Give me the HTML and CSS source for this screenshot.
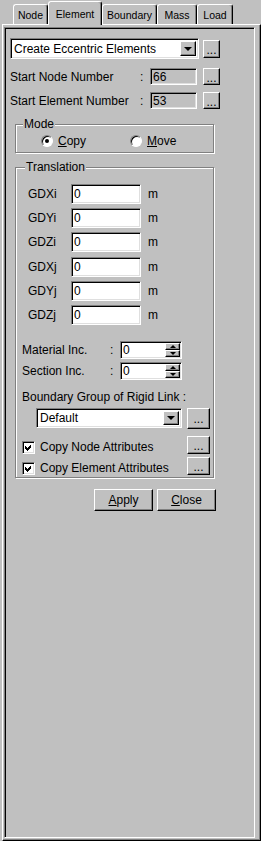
FILE: index.html
```html
<html>
<head>
<link rel="stylesheet" href="styles.css">
</head>
<body>
<div class="tabs">
    <div class="tab t-node">Node</div>
    <div class="tab active t-elem">Element</div>
    <div class="tab t-bound">Boundary</div>
    <div class="tab t-mass">Mass</div>
    <div class="tab t-load">Load</div>
</div>

<div class="panel">
<div class="frame">

    <div class="row r-type">
        <div class="combo combo-type">
            <span class="combo-text">Create Eccentric Elements</span>
            <span class="drop"><i class="arrow"></i></span>
        </div>
        <button class="btn dots">...</button>
    </div>

    <div class="row r-start">
        <span class="start-label">Start Node Number</span><span class="colon">:</span>
        <span class="field ro">66</span>
        <button class="btn dots">...</button>
    </div>
    <div class="row r-start r-start2">
        <span class="start-label">Start Element Number</span><span class="colon">:</span>
        <span class="field ro">53</span>
        <button class="btn dots">...</button>
    </div>

    <div class="group g-mode">
        <div class="group-title">Mode</div>
        <div class="radios">
            <label class="radio r-copy"><span class="radio-dot on"></span><span><u>C</u>opy</span></label>
            <label class="radio"><span class="radio-dot"></span><span><u>M</u>ove</span></label>
        </div>
    </div>

    <div class="group g-trans">
        <div class="group-title t-trans">Translation</div>

        <div class="gd-row gd-first"><span class="gd-label">GDXi</span><span class="field gd-input">0</span><span class="unit">m</span></div>
        <div class="gd-row"><span class="gd-label">GDYi</span><span class="field gd-input">0</span><span class="unit">m</span></div>
        <div class="gd-row"><span class="gd-label">GDZi</span><span class="field gd-input">0</span><span class="unit">m</span></div>
        <div class="gd-row"><span class="gd-label">GDXj</span><span class="field gd-input">0</span><span class="unit">m</span></div>
        <div class="gd-row"><span class="gd-label">GDYj</span><span class="field gd-input">0</span><span class="unit">m</span></div>
        <div class="gd-row"><span class="gd-label">GDZj</span><span class="field gd-input">0</span><span class="unit">m</span></div>

        <div class="inc-row inc-first">
            <span class="inc-label">Material Inc.</span><span class="colon">:</span>
            <span class="field spin"><span class="spin-text">0</span><span class="spin-btns"><span class="spin-b"><i class="up"></i></span><span class="spin-b"><i class="down"></i></span></span></span>
        </div>
        <div class="inc-row">
            <span class="inc-label">Section Inc.</span><span class="colon">:</span>
            <span class="field spin"><span class="spin-text">0</span><span class="spin-btns"><span class="spin-b"><i class="up"></i></span><span class="spin-b"><i class="down"></i></span></span></span>
        </div>

        <div class="bg-label">Boundary Group of Rigid Link :</div>
        <div class="bg-row">
            <div class="combo combo-bg">
                <span class="combo-text">Default</span>
                <span class="drop"><i class="arrow"></i></span>
            </div>
            <button class="btn dots wide">...</button>
        </div>

        <div class="check-row check-first">
            <span class="check"><svg width="7" height="7" viewBox="0 0 7 7"><path d="M0 2 L2 4 L6 0 V3 L2 7 L0 5 Z" fill="#000" shape-rendering="crispEdges"/></svg></span>
            <span class="check-text">Copy Node Attributes</span>
            <button class="btn dots wide">...</button>
        </div>
        <div class="check-row">
            <span class="check"><svg width="7" height="7" viewBox="0 0 7 7"><path d="M0 2 L2 4 L6 0 V3 L2 7 L0 5 Z" fill="#000" shape-rendering="crispEdges"/></svg></span>
            <span class="check-text">Copy Element Attributes</span>
            <button class="btn dots wide">...</button>
        </div>
    </div>

    <div class="actions">
        <button class="btn act"><u>A</u>pply</button>
        <button class="btn act"><u>C</u>lose</button>
    </div>

</div>
</div>
</body>
</html>
```

FILE: styles.css
```css
* {
    box-sizing: border-box;
}
body {
    margin: 0;
    width: 261px;
    height: 841px;
    overflow: hidden;
    background: #c0c0c0;
    color: #000;
    font-family: "Liberation Sans", Arial, sans-serif;
    font-size: 12px;
}

/* tabs */
.tabs {
    display: flex;
    align-items: flex-end;
    height: 24px;
    padding-left: 13px;
}
.tab {
    display: flex;
    justify-content: center;
    align-items: center;
    height: 20px;
    padding-top: 1px;
    border: 1px solid;
    border-bottom: none;
    border-color: #fff #000 #000 #fff;
    border-radius: 3px 3px 0 0;
    box-shadow: inset -1px 0 #808080;
    font-size: 10.5px;
    background: #c0c0c0;
}
.tab.active {
    position: relative;
    z-index: 1;
    height: 24px;
    margin-bottom: -1px;
    align-items: flex-start;
    padding-top: 6px;
}
.t-node { width: 35px; }
.t-elem { width: 54px; }
.t-bound { width: 55px; }
.t-mass { width: 40px; }
.t-load { width: 36px; }

/* panel */
.panel {
    width: 259px;
    height: 817px;
    margin-left: 2px;
    padding: 2px 5px 2px 1px;
    border: 1px solid;
    border-color: #fff #000 #000 #fff;
    box-shadow: inset -1px -1px #808080;
}
.frame {
    height: 100%;
    padding: 10px 0 0 5px;
    border: 1px solid;
    border-color: #808080 #fff #fff #808080;
    box-shadow: inset 1px 1px #000;
}

/* common controls */
.btn {
    display: flex;
    justify-content: center;
    align-items: center;
    padding: 0;
    margin: 0;
    font: inherit;
    color: #000;
    background: #c0c0c0;
    border: 1px solid;
    border-color: #fff #000 #000 #fff;
    box-shadow: inset -1px -1px #808080;
}
.dots {
    width: 17px;
    height: 18px;
    padding-top: 2px;
    line-height: 1;
}
.dots.wide {
    width: 23px;
    height: 18px;
}
.field {
    display: flex;
    align-items: center;
    padding-left: 2px;
    background: #fff;
    border: 1px solid;
    border-color: #808080 #fff #fff #808080;
    box-shadow: inset 1px 1px #000, inset -1px -1px #dfdfdf;
}
.field.ro {
    background: #c0c0c0;
    width: 47px;
    height: 17px;
}
.combo {
    display: flex;
    align-items: center;
    padding: 2px;
    background: #fff;
    border: 1px solid;
    border-color: #808080 #fff #fff #808080;
    box-shadow: inset 1px 1px #000, inset -1px -1px #dfdfdf;
}
.combo-text {
    flex: 1;
    padding-left: 1px;
}
.drop {
    display: flex;
    justify-content: center;
    align-items: center;
    width: 16px;
    height: 100%;
    border: 1px solid;
    border-color: #fff #000 #000 #fff;
    box-shadow: inset -1px -1px #808080;
    background: #c0c0c0;
}
.arrow {
    width: 0;
    height: 0;
    border-top: 4px solid #000;
    border-left: 4px solid transparent;
    border-right: 4px solid transparent;
    margin-top: 1px;
}

/* top rows */
.row {
    display: flex;
    align-items: center;
}
.r-type {
    height: 21px;
}
.combo-type {
    width: 189px;
    height: 21px;
}
.r-type .dots {
    margin-left: 4px;
}
.r-start {
    height: 17px;
    margin-top: 9px;
}
.r-start2 {
    margin-top: 7px;
}
.start-label {
    width: 130px;
}
.colon {
    width: 10px;
}
.r-start .dots {
    height: 17px;
    margin-left: 6px;
}

/* group boxes */
.group {
    width: 199px;
    margin-left: 5px;
    border: 1px solid #808080;
    box-shadow: inset 1px 1px #fff, 1px 1px #fff;
}
.group-title {
    width: fit-content;
    height: 14px;
    line-height: 14px;
    margin: -8px 0 0 7px;
    padding: 0 1px;
    background: #c0c0c0;
}
.g-mode {
    margin-top: 15px;
    padding-bottom: 5px;
}
.radios {
    display: flex;
    height: 13px;
    margin-top: 3px;
    padding-left: 25px;
}
.radio {
    display: flex;
    align-items: center;
    gap: 5px;
}
.r-copy {
    width: 89px;
}
.radio-dot {
    display: flex;
    justify-content: center;
    align-items: center;
    width: 12px;
    height: 12px;
    border-radius: 50%;
    background: #fff;
    border: 1px solid;
    border-color: #808080 #fff #fff #808080;
    box-shadow: inset 1px 1px #000;
}
.radio-dot.on::after {
    content: "";
    width: 4px;
    height: 4px;
    border-radius: 50%;
    background: #000;
}

.g-trans {
    margin-top: 14px;
    padding: 0 3px 2px 0;
}
.t-trans {
    margin-left: 9px;
}
.gd-row {
    display: flex;
    align-items: center;
    height: 20px;
    margin-top: 4.2px;
    padding-left: 12px;
}
.gd-first {
    margin-top: 10px;
}
.gd-label {
    width: 43px;
}
.gd-input {
    width: 70px;
    height: 20px;
}
.unit {
    margin-left: 7px;
}

.inc-row {
    display: flex;
    align-items: center;
    height: 18px;
    margin-top: 3px;
    padding-left: 6px;
}
.inc-first {
    margin-top: 16px;
}
.inc-label {
    width: 88px;
}
.spin {
    width: 62px;
    height: 18px;
    padding: 1px 1px 1px 2px;
}
.spin-text {
    flex: 1;
}
.spin-btns {
    display: flex;
    flex-direction: column;
    width: 15px;
    height: 100%;
}
.spin-b {
    flex: 1;
    display: flex;
    justify-content: center;
    align-items: center;
    background: #c0c0c0;
    border: 1px solid;
    border-color: #fff #000 #000 #fff;
    box-shadow: inset -1px -1px #808080;
}
.up, .down {
    width: 0;
    height: 0;
    border-left: 3px solid transparent;
    border-right: 3px solid transparent;
}
.up {
    border-bottom: 3px solid #000;
}
.down {
    border-top: 3px solid #000;
}

.bg-label {
    height: 14px;
    line-height: 14px;
    margin-top: 10px;
    padding-left: 6px;
}
.bg-row {
    display: flex;
    align-items: flex-start;
    justify-content: space-between;
    height: 21px;
    margin-top: 4px;
    padding-left: 20px;
}
.combo-bg {
    width: 146px;
    height: 20px;
}
.bg-row .dots {
    height: 21px;
}

.check-row {
    display: flex;
    align-items: center;
    height: 18px;
    margin-top: 3px;
    padding-left: 6px;
}
.check-first {
    margin-top: 7px;
}
.check {
    display: flex;
    justify-content: center;
    align-items: center;
    width: 13px;
    height: 13px;
    margin-top: 5px;
    background: #fff;
    border: 1px solid;
    border-color: #808080 #fff #fff #808080;
    box-shadow: inset 1px 1px #000, inset -1px -1px #dfdfdf;
}
.check-text {
    flex: 1;
    margin-left: 5px;
    margin-top: 4px;
}

.actions {
    display: flex;
    gap: 4px;
    margin-top: 11px;
    padding-left: 84px;
}
.act {
    width: 59px;
    height: 22px;
}
```
